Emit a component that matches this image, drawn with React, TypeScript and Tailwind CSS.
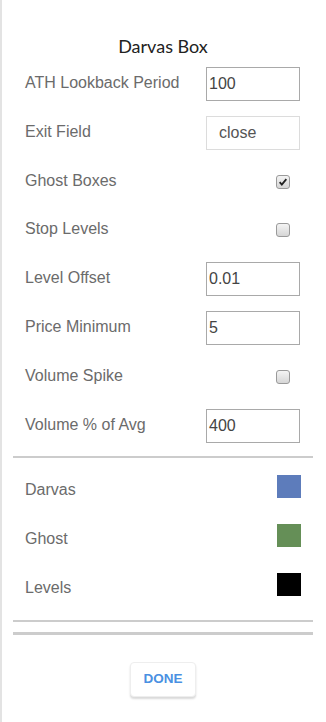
import React from 'react'

type Row =
  | { label: string; kind: 'input'; value: string }
  | { label: string; kind: 'select'; value: string }
  | { label: string; kind: 'check'; checked: boolean; h?: string }

const rows: Row[] = [
  { label: 'ATH Lookback Period', kind: 'input', value: '100' },
  { label: 'Exit Field', kind: 'select', value: 'close' },
  { label: 'Ghost Boxes', kind: 'check', checked: true },
  { label: 'Stop Levels', kind: 'check', checked: false, h: 'h-[48px]' },
  { label: 'Level Offset', kind: 'input', value: '0.01' },
  { label: 'Price Minimum', kind: 'input', value: '5' },
  { label: 'Volume Spike', kind: 'check', checked: false },
  { label: 'Volume % of Avg', kind: 'input', value: '400' },
]

const colors = [
  { label: 'Darvas', color: 'bg-[#5d7cbb]' },
  { label: 'Ghost', color: 'bg-[#658f57]' },
  { label: 'Levels', color: 'bg-black' },
]

const Checkbox = ({ checked }: { checked: boolean }) => (
  <span className="mr-[10px] flex h-[14px] w-[14px] items-center justify-center rounded-[3px] border border-[#9a9a9a] bg-gradient-to-b from-[#f4f4f4] to-[#d6d6d6]">
    {checked && (
      <svg viewBox="0 0 12 12" className="h-[10px] w-[10px]">
        <path d="M2 6.2 L4.6 9 L10 2.6" fill="none" stroke="#222" strokeWidth="2.2" />
      </svg>
    )}
  </span>
)

const Field = ({ row }: { row: Row }) => {
  if (row.kind === 'input')
    return (
      <div className="flex h-[34px] w-[94px] items-center border border-[#a9a9a9] pl-[2px] text-[16px] text-[#444]">
        {row.value}
      </div>
    )
  if (row.kind === 'select')
    return (
      <div className="flex h-[34px] w-[94px] items-center border border-[#dcdcdc] pl-[12px] text-[16px] text-[#555]">
        {row.value}
      </div>
    )
  return <Checkbox checked={row.checked} />
}

export default function App() {
  return (
    <div
      className="relative h-[722px] w-[326px] overflow-hidden border-l-2 border-[#e3e3e3] bg-white"
      style={{ fontFamily: '"Liberation Sans", Arial, sans-serif' }}
    >
      <div className="absolute left-[-2px] top-[249px] flex h-[38px] w-[2px] flex-col">
        <div className="h-[2px] bg-[#3a3a3a]" />
        <div className="flex-1 bg-[#c0300c]" />
        <div className="h-[4px] bg-[#666]" />
      </div>

      <div className="pl-[11px] pr-[13px] pt-[35px]">
        <h1
          className="h-[24px] text-center text-[18px] leading-[22px] text-[#222]"
          style={{ fontFamily: 'Lato, "Liberation Sans", sans-serif' }}
        >
          Darvas Box
        </h1>

        <div className="flex flex-col">
          {rows.map((r) => (
            <div
              key={r.label}
              className={`flex items-center justify-between pl-[12px] pr-[13px] ${
                r.kind === 'check' && r.h ? r.h : 'h-[49px]'
              }`}
            >
              <span className="mb-[2px] text-[16px] text-[#6b6b6b]">{r.label}</span>
              <Field row={r} />
            </div>
          ))}
        </div>

        <div className="mt-[6px] h-[2px] bg-[#cccccc]" />

        <div className="flex flex-col">
          {colors.map((c) => (
            <div key={c.label} className="flex h-[49px] items-start justify-between pl-[12px] pr-[12px] pt-[17px]">
              <span className="mt-[6px] text-[16px] leading-[18px] text-[#6b6b6b]">{c.label}</span>
              <span className={`h-[23px] w-[24px] ${c.color}`} />
            </div>
          ))}
        </div>

        <div className="mt-[15px] h-[2px] bg-[#cccccc]" />
        <div className="mt-[10px] h-[3px] bg-[#cccccc]" />

        <div className="mt-[27px] flex justify-center">
          <button
            type="button"
            className="h-[35px] w-[66px] rounded-[4px] border border-[#eeeeee] bg-white text-[13.5px] font-bold text-[#4a90e2] shadow-[0_2px_2px_rgba(0,0,0,0.15)]"
          >
            DONE
          </button>
        </div>
      </div>
    </div>
  )
}
